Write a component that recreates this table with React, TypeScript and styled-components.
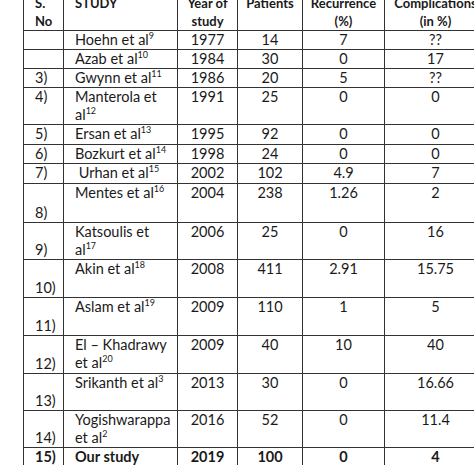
import React from 'react'
import styled, { createGlobalStyle } from 'styled-components'

const GlobalStyle = createGlobalStyle`
  html, body {
    margin: 0;
    padding: 0;
    background: #fff;
    overflow: hidden;
  }
  body {
    width: 474px;
    height: 465px;
  }
`

const Page = styled.div`
  padding-left: 23px;
  margin-top: -7px;
  font-family: Lato, 'Open Sans', sans-serif;
  font-size: 14.5px;
  color: #1a1a1a;
`

const Table = styled.table`
  border-collapse: collapse;
  table-layout: fixed;
  width: 463px;
`

const Row = styled.tr<{ $h: number }>`
  height: ${({ $h }) => $h}px;
`

const Head = styled.th<{ $align?: string }>`
  border: 1px solid #333;
  padding: 0;
  font-size: 13px;
  font-weight: 700;
  line-height: 18px;
  vertical-align: top;
  text-align: ${({ $align }) => $align || 'center'};
  padding-left: ${({ $align }) => ($align === 'left' ? '11px' : '0')};
  white-space: nowrap;
`

const NoCell = styled.td<{ $bottom?: boolean; $bold?: boolean }>`
  border: 1px solid #333;
  padding: 0 0 0 11px;
  line-height: 18px;
  vertical-align: ${({ $bottom }) => ($bottom ? 'bottom' : 'top')};
  font-weight: ${({ $bold }) => ($bold ? 700 : 400)};
`

const StudyCell = styled.td<{ $bold?: boolean }>`
  border: 1px solid #333;
  padding: 0 8px 0 11px;
  line-height: 18px;
  vertical-align: top;
  font-weight: ${({ $bold }) => ($bold ? 700 : 400)};
`

const NumCell = styled.td<{ $bold?: boolean }>`
  border: 1px solid #333;
  padding: 0;
  line-height: 18px;
  vertical-align: top;
  text-align: center;
  font-weight: ${({ $bold }) => ($bold ? 700 : 400)};
`

const Ref = styled.sup`
  font-size: 9px;
  line-height: 0;
  vertical-align: 6px;
`

type Study = {
  no: string
  name: React.ReactNode
  year: string
  patients: string
  recurrence: string
  complications: string
  h: number
  bottom?: boolean
  bold?: boolean
}

const rows: Study[] = [
  { no: '', name: <>Hoehn et al<Ref>9</Ref></>, year: '1977', patients: '14', recurrence: '7', complications: '??', h: 19 },
  { no: '', name: <>Azab et al<Ref>10</Ref></>, year: '1984', patients: '30', recurrence: '0', complications: '17', h: 19 },
  { no: '3)', name: <>Gwynn et al<Ref>11</Ref></>, year: '1986', patients: '20', recurrence: '5', complications: '??', h: 19 },
  { no: '4)', name: <>Manterola et al<Ref>12</Ref></>, year: '1991', patients: '25', recurrence: '0', complications: '0', h: 37 },
  { no: '5)', name: <>Ersan et al<Ref>13</Ref></>, year: '1995', patients: '92', recurrence: '0', complications: '0', h: 20 },
  { no: '6)', name: <>Bozkurt et al<Ref>14</Ref></>, year: '1998', patients: '24', recurrence: '0', complications: '0', h: 19 },
  { no: '7)', name: <>&nbsp;Urhan et al<Ref>15</Ref></>, year: '2002', patients: '102', recurrence: '4.9', complications: '7', h: 20 },
  { no: '8)', name: <>Mentes et al<Ref>16</Ref></>, year: '2004', patients: '238', recurrence: '1.26', complications: '2', h: 39, bottom: true },
  { no: '9)', name: <>Katsoulis et al<Ref>17</Ref></>, year: '2006', patients: '25', recurrence: '0', complications: '16', h: 36, bottom: true },
  { no: '10)', name: <>Akin et al<Ref>18</Ref></>, year: '2008', patients: '411', recurrence: '2.91', complications: '15.75', h: 38, bottom: true },
  { no: '11)', name: <>Aslam et al<Ref>19</Ref></>, year: '2009', patients: '110', recurrence: '1', complications: '5', h: 38, bottom: true },
  { no: '12)', name: <>El – Khadrawy et al<Ref>20</Ref></>, year: '2009', patients: '40', recurrence: '10', complications: '40', h: 38, bottom: true },
  { no: '13)', name: <>Srikanth et al<Ref>3</Ref></>, year: '2013', patients: '30', recurrence: '0', complications: '16.66', h: 37, bottom: true },
  { no: '14)', name: <>Yogishwarappa et al<Ref>2</Ref></>, year: '2016', patients: '52', recurrence: '0', complications: '11.4', h: 37, bottom: true },
  { no: '15)', name: 'Our study', year: '2019', patients: '100', recurrence: '0', complications: '4', h: 20, bold: true },
]

export default function App() {
  return (
    <Page>
      <GlobalStyle />
      <Table>
        <colgroup>
          <col style={{ width: 40 }} />
          <col style={{ width: 114 }} />
          <col style={{ width: 60 }} />
          <col style={{ width: 65 }} />
          <col style={{ width: 82 }} />
          <col style={{ width: 102 }} />
        </colgroup>
        <thead>
          <Row $h={37}>
            <Head $align="left">
              S.
              <br />
              No
            </Head>
            <Head $align="left">STUDY</Head>
            <Head>
              Year of
              <br />
              study
            </Head>
            <Head>Patients</Head>
            <Head>
              Recurrence
              <br />
              (%)
            </Head>
            <Head>
              Complications
              <br />
              (in %)
            </Head>
          </Row>
        </thead>
        <tbody>
          {rows.map((r, i) => (
            <Row key={i} $h={r.h}>
              <NoCell $bottom={r.bottom} $bold={r.bold}>{r.no}</NoCell>
              <StudyCell $bold={r.bold}>{r.name}</StudyCell>
              <NumCell $bold={r.bold}>{r.year}</NumCell>
              <NumCell $bold={r.bold}>{r.patients}</NumCell>
              <NumCell $bold={r.bold}>{r.recurrence}</NumCell>
              <NumCell $bold={r.bold}>{r.complications}</NumCell>
            </Row>
          ))}
        </tbody>
      </Table>
    </Page>
  )
}
